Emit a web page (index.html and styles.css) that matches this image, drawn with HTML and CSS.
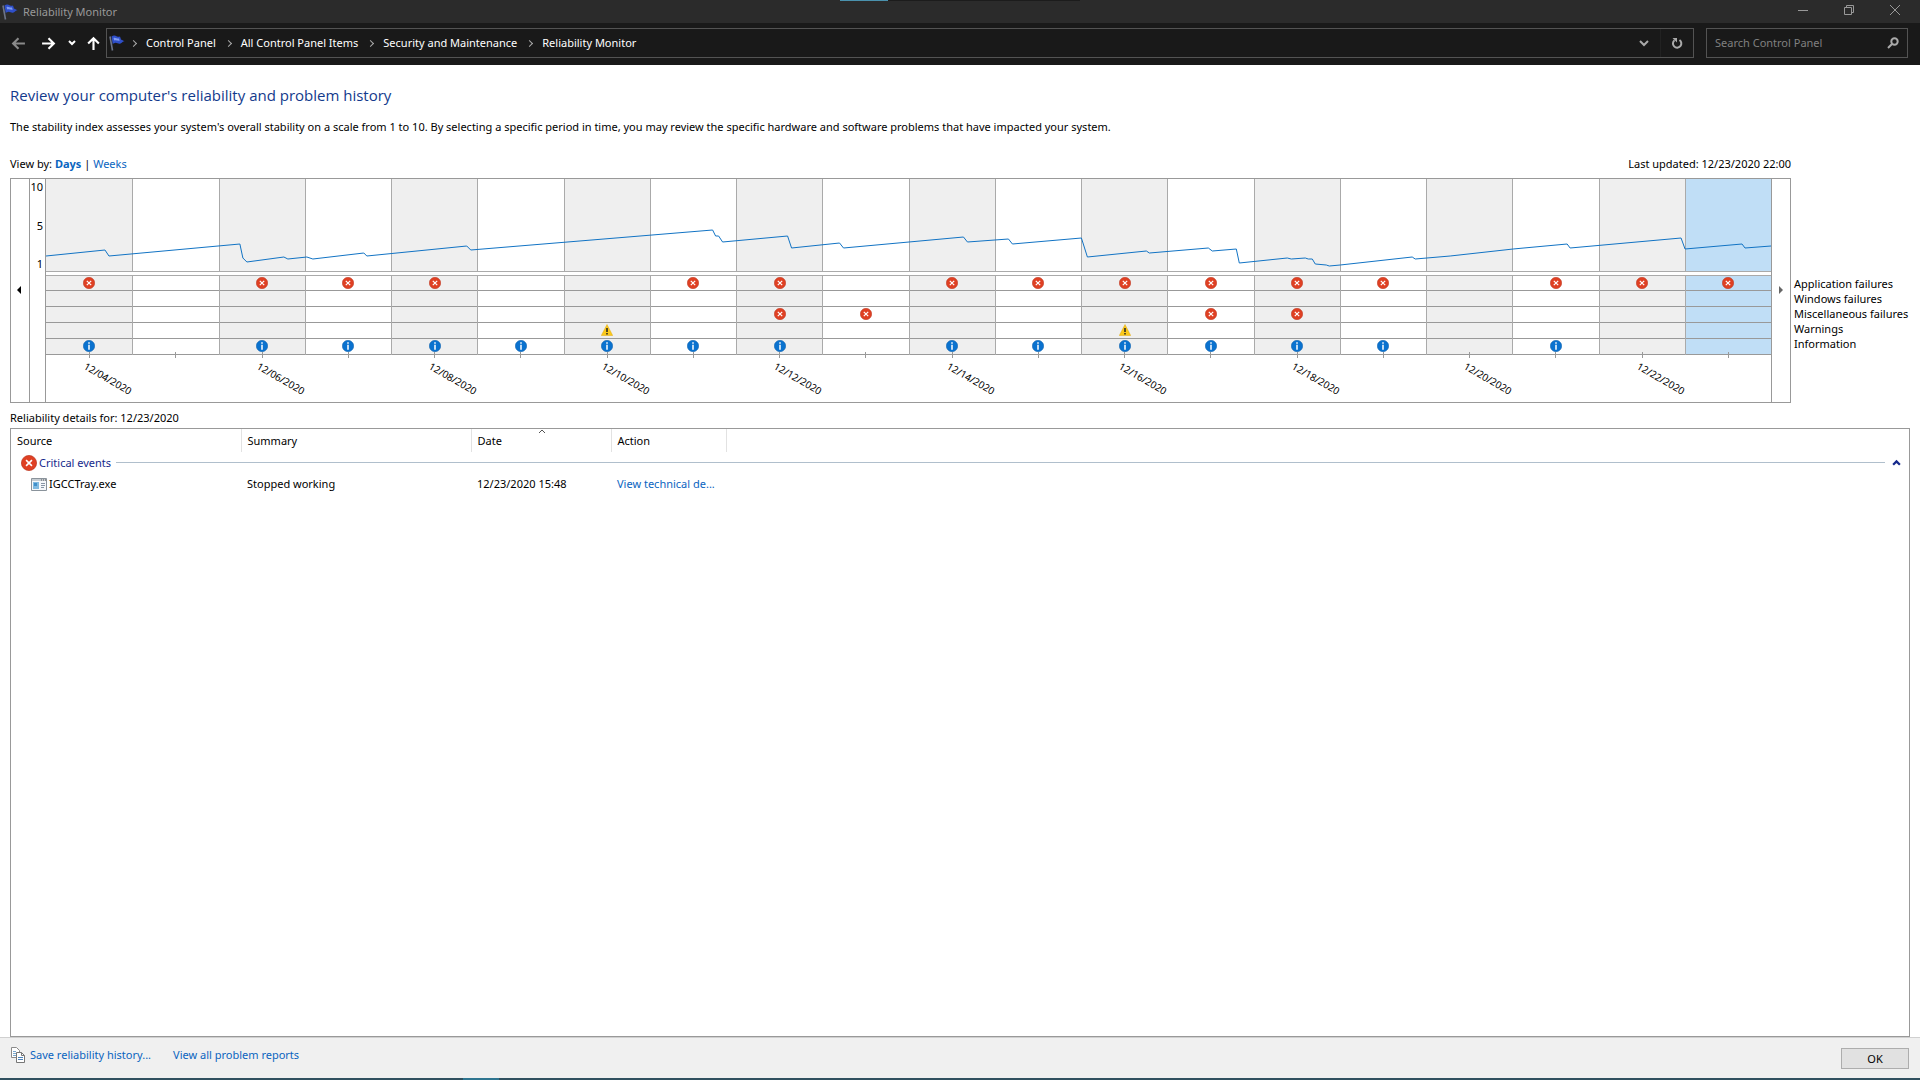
FILE: index.html
```html
<!DOCTYPE html>
<html lang="en">
<head>
<meta charset="utf-8">
<title>Reliability Monitor</title>
<link rel="stylesheet" href="styles.css">
</head>
<body>
<svg class="sprite" aria-hidden="true">
  <symbol id="flag" viewBox="0 0 16 16">
    <path d="M1 1.500 3.500 15.500" stroke="#6d7488" stroke-width="1.600" fill="none"/>
    <path d="M2.500 1.500C4.500.2 6 .4 8 1.400c1.200.6 2 .5 3 .1l1 3 3.500 1.800c-2 .2-2.600 1.600-4 2.200-2 .8-3.500-.9-5.400-.6-.9.100-1.700.5-2.400 1z" fill="#2f4fc9"/>
    <path d="M4.500 3c1.800-.9 3.500.9 5.500.5l.7 2.300c-2 .4-3.400-1-5.500-.3z" fill="#7f9bf2"/>
  </symbol>
  <symbol id="error" viewBox="0 0 12 12">
    <circle cx="6" cy="6" r="5.700" fill="#df4023" stroke="#b92f18" stroke-width=".5"/>
    <path d="M3.800 3.800 8.200 8.200M8.200 3.800 3.800 8.200" stroke="#fff" stroke-width="1.200" fill="none"/>
  </symbol>
  <symbol id="info" viewBox="0 0 12 12">
    <circle cx="6" cy="6" r="5.700" fill="#0a72cf" stroke="#075ba8" stroke-width=".5"/>
    <path d="M6 2.300v1.500M6 4.800v5" stroke="#fff" stroke-width="1.500" fill="none"/>
  </symbol>
  <symbol id="warning" viewBox="0 0 12 12">
    <path d="M6 .5 11.700 11.500H.3z" fill="#fbc91b" stroke="#e0ab10" stroke-width=".5"/>
    <path d="M6 4v4M6 8.900v1.500" stroke="#222" stroke-width="1.500" fill="none"/>
  </symbol>
</svg>

<header class="titlebar">
  <svg class="icon16" aria-hidden="true"><use href="#flag"/></svg>
  <span class="window-title">Reliability Monitor</span>
  <span class="load-strip"></span>
  <button class="window-button" aria-label="Minimize"><svg viewBox="0 0 12 12"><path d="M1 6.500h10"/></svg></button>
  <button class="window-button" aria-label="Restore"><svg viewBox="0 0 12 12"><path d="M1.500 3.500h7v7h-7zM3.500 3.500v-2h7v7h-2"/></svg></button>
  <button class="window-button" aria-label="Close"><svg viewBox="0 0 12 12"><path d="M1 1l10 10M11 1L1 11"/></svg></button>
</header>

<nav class="toolbar" aria-label="Navigation">
  <div class="history">
    <button class="nav-button dim" aria-label="Back"><svg viewBox="0 0 14 14"><path d="M13 7H2M7 2 2 7l5 5"/></svg></button>
    <button class="nav-button" aria-label="Forward"><svg viewBox="0 0 14 14"><path d="M1 7h11M7 2l5 5-5 5"/></svg></button>
    <button class="nav-button small" aria-label="Recent locations"><svg viewBox="0 0 8 8"><path d="M1 2l3 3 3-3"/></svg></button>
    <button class="nav-button" aria-label="Up"><svg viewBox="0 0 14 14"><path d="M7 13V2M2 7l5-5 5 5"/></svg></button>
  </div>
  <div class="address">
    <svg class="icon16" aria-hidden="true"><use href="#flag"/></svg>
    <ol class="crumbs">
      <li><a href="#">Control Panel</a></li>
      <li><a href="#">All Control Panel Items</a></li>
      <li><a href="#">Security and Maintenance</a></li>
      <li><a href="#">Reliability Monitor</a></li>
    </ol>
    <button class="address-button" aria-label="Previous locations"><svg viewBox="0 0 12 12"><path d="M2 4l4 4 4-4"/></svg></button>
    <button class="address-button refresh" aria-label="Refresh"><svg viewBox="0 0 12 12"><path d="M8.500 3A4.200 4.200 0 1 1 3.500 3.200"/><path class="head" d="M1.500 1H6v4.500z"/></svg></button>
  </div>
  <div class="search">
    <input type="text" placeholder="Search Control Panel" aria-label="Search Control Panel">
    <svg viewBox="0 0 12 12" aria-hidden="true"><circle cx="7.500" cy="4.500" r="3.200"/><path d="M5.200 6.800 1 11"/></svg>
  </div>
</nav>

<main class="content">
  <h1>Review your computer's reliability and problem history</h1>
  <p class="intro">The stability index assesses your system's overall stability on a scale from 1 to 10. By selecting a specific period in time, you may review the specific hardware and software problems that have impacted your system.</p>

  <section class="report" aria-label="Stability chart">
    <div class="report-main">
      <div class="chart-head">
        <span>View by: <a href="#" class="current">Days</a> | <a href="#">Weeks</a></span>
        <span>Last updated: 12/23/2020 22:00</span>
      </div>
      <div class="chart">
        <button class="scroll" aria-label="Earlier"><svg viewBox="0 0 4 8"><path d="M4 0v8L0 4z"/></svg></button>
        <div class="scale"><span>10</span><span>5</span><span>1</span></div>
        <div class="plot" id="plot">
          <svg class="trend" viewBox="0 0 1726 92" preserveAspectRatio="none" aria-hidden="true">
            <polyline points="0,77 59,71 63,77 194,65 197,79 201,83 238,78 242,80 261,78 267,80 318,74 321,77 421,67 425,71 667,51 670,57 673,57 677,63 742,57 746,69 794,64 798,69 918,58 922,63 963,60 967,65 1036,59 1042,78 1101,72 1104,74 1163,69 1167,72 1191,70 1194,84 1242,79 1246,80 1260,79 1263,80 1267,80 1270,85 1281,86 1284,87 1295,86 1367,78 1370,80 1405,77 1468,70 1522,65 1525,69 1636,59 1640,70 1697,65 1700,69 1726,67"/>
          </svg>
        </div>
        <button class="scroll later" aria-label="Later"><svg viewBox="0 0 4 8"><path d="M0 0v8l4-4z"/></svg></button>
      </div>
    </div>
    <ul class="legend">
      <li>Application failures</li>
      <li>Windows failures</li>
      <li>Miscellaneous failures</li>
      <li>Warnings</li>
      <li>Information</li>
    </ul>
  </section>

  <h2>Reliability details for: 12/23/2020</h2>
  <div class="details">
    <table>
      <colgroup><col class="c-source"><col class="c-summary"><col class="c-date"><col class="c-action"><col></colgroup>
      <thead>
        <tr><th>Source</th><th>Summary</th><th class="sorted">Date<svg viewBox="0 0 8 5" aria-hidden="true"><path d="M1 4l3-3 3 3"/></svg></th><th>Action</th><th class="rest"></th></tr>
      </thead>
      <tbody>
        <tr class="group"><td colspan="5"><div class="group-line">
          <svg class="icon16" aria-hidden="true"><use href="#error"/></svg>
          <span>Critical events</span><span class="rule"></span>
          <button aria-label="Collapse"><svg viewBox="0 0 8 6"><path d="M1 5l3-3 3 3"/></svg></button>
        </div></td></tr>
        <tr>
          <td><div class="source"><svg class="icon16" viewBox="0 0 16 16" aria-hidden="true"><path d="M.5 2.500h15v12H.5z" fill="#f6f8fa" stroke="#8a939b"/><path d="M1 3h14v2H1z" fill="#c5ccd2"/><path d="M10 4h1m1 0h1m1 0h1" stroke="#555"/><path d="M2 6h6v7H2z" fill="#7fb9e0"/><path d="M3 7h3v3H3z" fill="#3f8fca"/><path d="M10 7.500h4M10 9.500h4M10 11.500h3" stroke="#8795a5"/></svg>IGCCTray.exe</div></td>
          <td>Stopped working</td><td>12/23/2020 15:48</td><td><a href="#">View technical de...</a></td><td></td>
        </tr>
      </tbody>
    </table>
  </div>
</main>

<footer class="footer">
  <a href="#" class="save"><svg viewBox="0 0 14 16" aria-hidden="true"><path d="M.5.500h5l3 3v7h-8z" fill="#fff" stroke="#8b8b8b"/><path d="M2 4.500h3M2 6.500h3M2 8.500h3" stroke="#78a8d0"/><path d="M5.500 5.500h5l3 3v7h-8z" fill="#fff" stroke="#777"/><path d="M10.500 5.500v3h3" fill="none" stroke="#777"/><path d="M7 10.500h5M7 12.500h5" stroke="#4b83bd"/></svg>Save reliability history...</a>
  <a href="#">View all problem reports</a>
  <button class="ok">OK</button>
</footer>
<div class="desktop-edge"><span></span></div>
<script src="chart.js"></script>
</body>
</html>
```
FILE: chart.js
```js
// Marks per day, one letter for each row that has an event:
// a = application failure, m = miscellaneous failure, w = warning, i = information
const days = ["ai", "", "ai", "ai", "ai", "i", "wi", "ai", "ami", "m",
  "ai", "ai", "awi", "ami", "ami", "ai", "", "ai", "a", "a"];
const rows = [["a", "error"], ["f", "error"], ["m", "error"], ["w", "warning"], ["i", "info"]];
const plot = document.getElementById("plot");

days.forEach((marks, index) => {
  const selected = index === days.length - 1 ? " selected" : "";
  const cells = rows.map(([key, icon]) =>
    `<div class="cell">${marks.includes(key) ? `<svg><use href="#${icon}"/></svg>` : ""}</div>`).join("");
  const date = `12/${String(index + 4).padStart(2, "0")}/2020`;
  const label = index % 2 === 0 ? `<span class="date">${date}</span>` : "";
  plot.insertAdjacentHTML("beforeend",
    `<div class="day${selected}"><div class="graph"></div><div class="cells">${cells}</div><div class="axis">${label}</div></div>`);
});
```
FILE: styles.css
```css
* { box-sizing: border-box; }

body {
  margin: 0;
  min-height: 100vh;
  display: flex;
  flex-direction: column;
  font: 11px/16px "Noto Sans", "Open Sans", sans-serif;
  color: #000;
  background: #fff;
}

button {
  margin: 0;
  padding: 0;
  border: 0;
  background: none;
  font: inherit;
  color: inherit;
  display: flex;
  align-items: center;
  justify-content: center;
}

a { color: #0a64bf; text-decoration: none; }
.sprite { position: absolute; width: 0; height: 0; }
.icon16 { width: 16px; height: 16px; flex: none; }

/* Window frame */
.titlebar {
  position: relative;
  display: flex;
  align-items: center;
  height: 23px;
  padding-left: 2px;
  background: #2b2b2b;
  color: #999;
}
.window-title { margin-left: 5px; flex: 1; }
.load-strip {
  position: absolute;
  top: 0;
  left: 840px;
  width: 240px;
  height: 1px;
  background: linear-gradient(90deg, #4a91ad 48px, #1c1c1c 48px);
}
.window-button { width: 46px; height: 20px; align-self: flex-start; }
.window-button:last-child { margin-right: 2px; }
.window-button svg { width: 12px; height: 12px; fill: none; stroke: #999; }

.toolbar {
  display: flex;
  align-items: center;
  height: 42px;
  padding: 0 12px 2px 11px;
  background: #191919;
  color: #fff;
}
.history { display: flex; align-items: center; width: 94px; gap: 10px; }
.nav-button svg { width: 15px; height: 15px; fill: none; stroke: #fff; stroke-width: 2; }
.nav-button:nth-child(2) { margin-left: 5px; }
.nav-button.small { margin-left: 2px; }
.nav-button.small svg { width: 8px; height: 8px; }
.nav-button.dim svg { stroke: #8a8a8a; }
.address {
  flex: 1;
  display: flex;
  align-items: center;
  height: 30px;
  margin-left: 1px;
  padding-left: 2px;
  border: 1px solid #535353;
}
.crumbs { display: flex; flex: 1; gap: 4px; margin: 0; padding: 0; list-style: none; }
.crumbs li { display: flex; align-items: center; }
.crumbs a { color: #fff; }
.crumbs li::before {
  content: "";
  width: 4px;
  height: 4px;
  margin: 0 10px 0 6px;
  border: solid #aaa;
  border-width: 1px 1px 0 0;
  transform: rotate(45deg);
}
.address-button { width: 33px; height: 28px; }
.address-button.refresh { border-left: 1px solid #222; }
.address-button svg, .search svg { width: 12px; height: 12px; fill: none; stroke: #aaa; stroke-width: 2; }
.address-button svg .head { fill: #aaa; stroke: none; }
.search {
  display: flex;
  align-items: center;
  width: 202px;
  height: 30px;
  margin-left: 12px;
  padding: 0 8px;
  border: 1px solid #535353;
}
.search input {
  flex: 1;
  min-width: 0;
  padding: 0;
  border: 0;
  outline: 0;
  background: none;
  color: #fff;
  font: inherit;
}
.search input::placeholder { color: #808080; opacity: 1; }

/* Page */
.content { flex: 1; display: flex; flex-direction: column; padding: 0 10px; }
h1 { margin: 20px 0 12px; font: 400 15px/20px "Open Sans", sans-serif; color: #133a8c; }
.intro { margin: 2px 0 21px; }
h2 { margin: 7px 0 2px; font-size: 11px; line-height: 16px; font-weight: 400; }
.current { font-weight: 700; }

.report { display: flex; gap: 3px; }
.report-main { flex: 1; min-width: 0; }
.chart-head { display: flex; justify-content: space-between; height: 22px; }
.chart { display: flex; height: 225px; border: 1px solid #999; }
.scroll { width: 19px; padding: 0 2px 2px 0; border-right: 1px solid #999; }
.scroll svg { width: 4px; height: 8px; }
.scroll.later { padding: 0 0 2px; border: 0; border-left: 1px solid #999; fill: #666; }
.scale {
  display: flex;
  flex-direction: column;
  justify-content: space-between;
  width: 15px;
  height: 93px;
  padding-right: 2px;
  text-align: right;
}
.scale + .plot { border-left: 1px solid #999; }
.plot { position: relative; flex: 1; display: grid; grid-template-columns: repeat(20, minmax(0, 1fr)); }
.trend { position: absolute; inset: 0 0 auto; width: 100%; height: 92px; overflow: visible; }
.trend polyline { fill: none; stroke: #1173c4; stroke-width: 1px; vector-effect: non-scaling-stroke; }
.graph { height: 93px; border: solid #aaa; border-width: 0 0 1px 1px; }
.cells { margin-top: 3px; border: solid #aaa; border-width: 1px 0 0 1px; }
.cell { display: flex; justify-content: center; height: 16px; border-bottom: 1px solid #999; }
.cell:first-child { height: 15px; }
.cell svg { width: 12px; height: 12px; margin-top: 1px; }
.day:nth-child(even) .graph, .day:nth-child(even) .cells { background: #efefef; }
.day:nth-child(2) .graph, .day:nth-child(2) .cells { border-left: 0; }
.day.selected .graph, .day.selected .cells { background: #c0def6; }
.axis { position: relative; }
.axis::before {
  content: "";
  position: absolute;
  left: 50%;
  top: -3px;
  width: 1px;
  height: 6px;
  background: #999;
}
.date {
  position: absolute;
  left: calc(50% - 4px);
  top: 4px;
  font-size: 10px;
  line-height: 12px;
  white-space: nowrap;
  transform-origin: 0 50%;
  transform: rotate(30deg);
}
.legend { width: 116px; margin: 0; padding: 120px 0 0; list-style: none; line-height: 15px; white-space: nowrap; }

/* Details list */
.details { flex: 1; border: 1px solid #999; }
table { width: 100%; table-layout: fixed; border-collapse: collapse; }
.c-source, .c-summary { width: 230px; }
.c-date { width: 140px; }
.c-action { width: 115px; }
th, td { padding: 0 6px; text-align: left; font-weight: 400; white-space: nowrap; }
th { height: 23px; border-right: 1px solid #e2e2e2; }
th.rest { border: 0; }
.sorted { position: relative; }
.sorted svg { position: absolute; top: 0; left: 66px; width: 8px; height: 5px; fill: none; stroke: #555; }
.group td { padding: 0 8px 0 10px; }
.group-line { display: flex; align-items: center; gap: 2px; height: 21px; color: #15298c; }
.rule { flex: 1; height: 1px; margin: 0 5px 0 3px; background: #b0bfcc; }
.group-line button svg { width: 9px; height: 7px; fill: none; stroke: #15298c; stroke-width: 2; }
.source { display: flex; align-items: center; gap: 2px; height: 21px; margin-left: 14px; }

/* Footer */
.footer {
  display: flex;
  gap: 22px;
  height: 41px;
  padding: 9px 11px 0;
  border-top: 1px solid #d0d0d0;
  background: #f0f0f0;
}
.save { display: flex; gap: 5px; }
.save svg { width: 14px; height: 16px; }
.ok { width: 68px; height: 21px; margin: 1px 0 0 auto; border: 1px solid #adadad; background: #e1e1e1; }
.desktop-edge { height: 2px; background: #30505f; }
.desktop-edge span { display: block; width: 36px; height: 2px; margin-left: 463px; background: #2f7590; }
```
